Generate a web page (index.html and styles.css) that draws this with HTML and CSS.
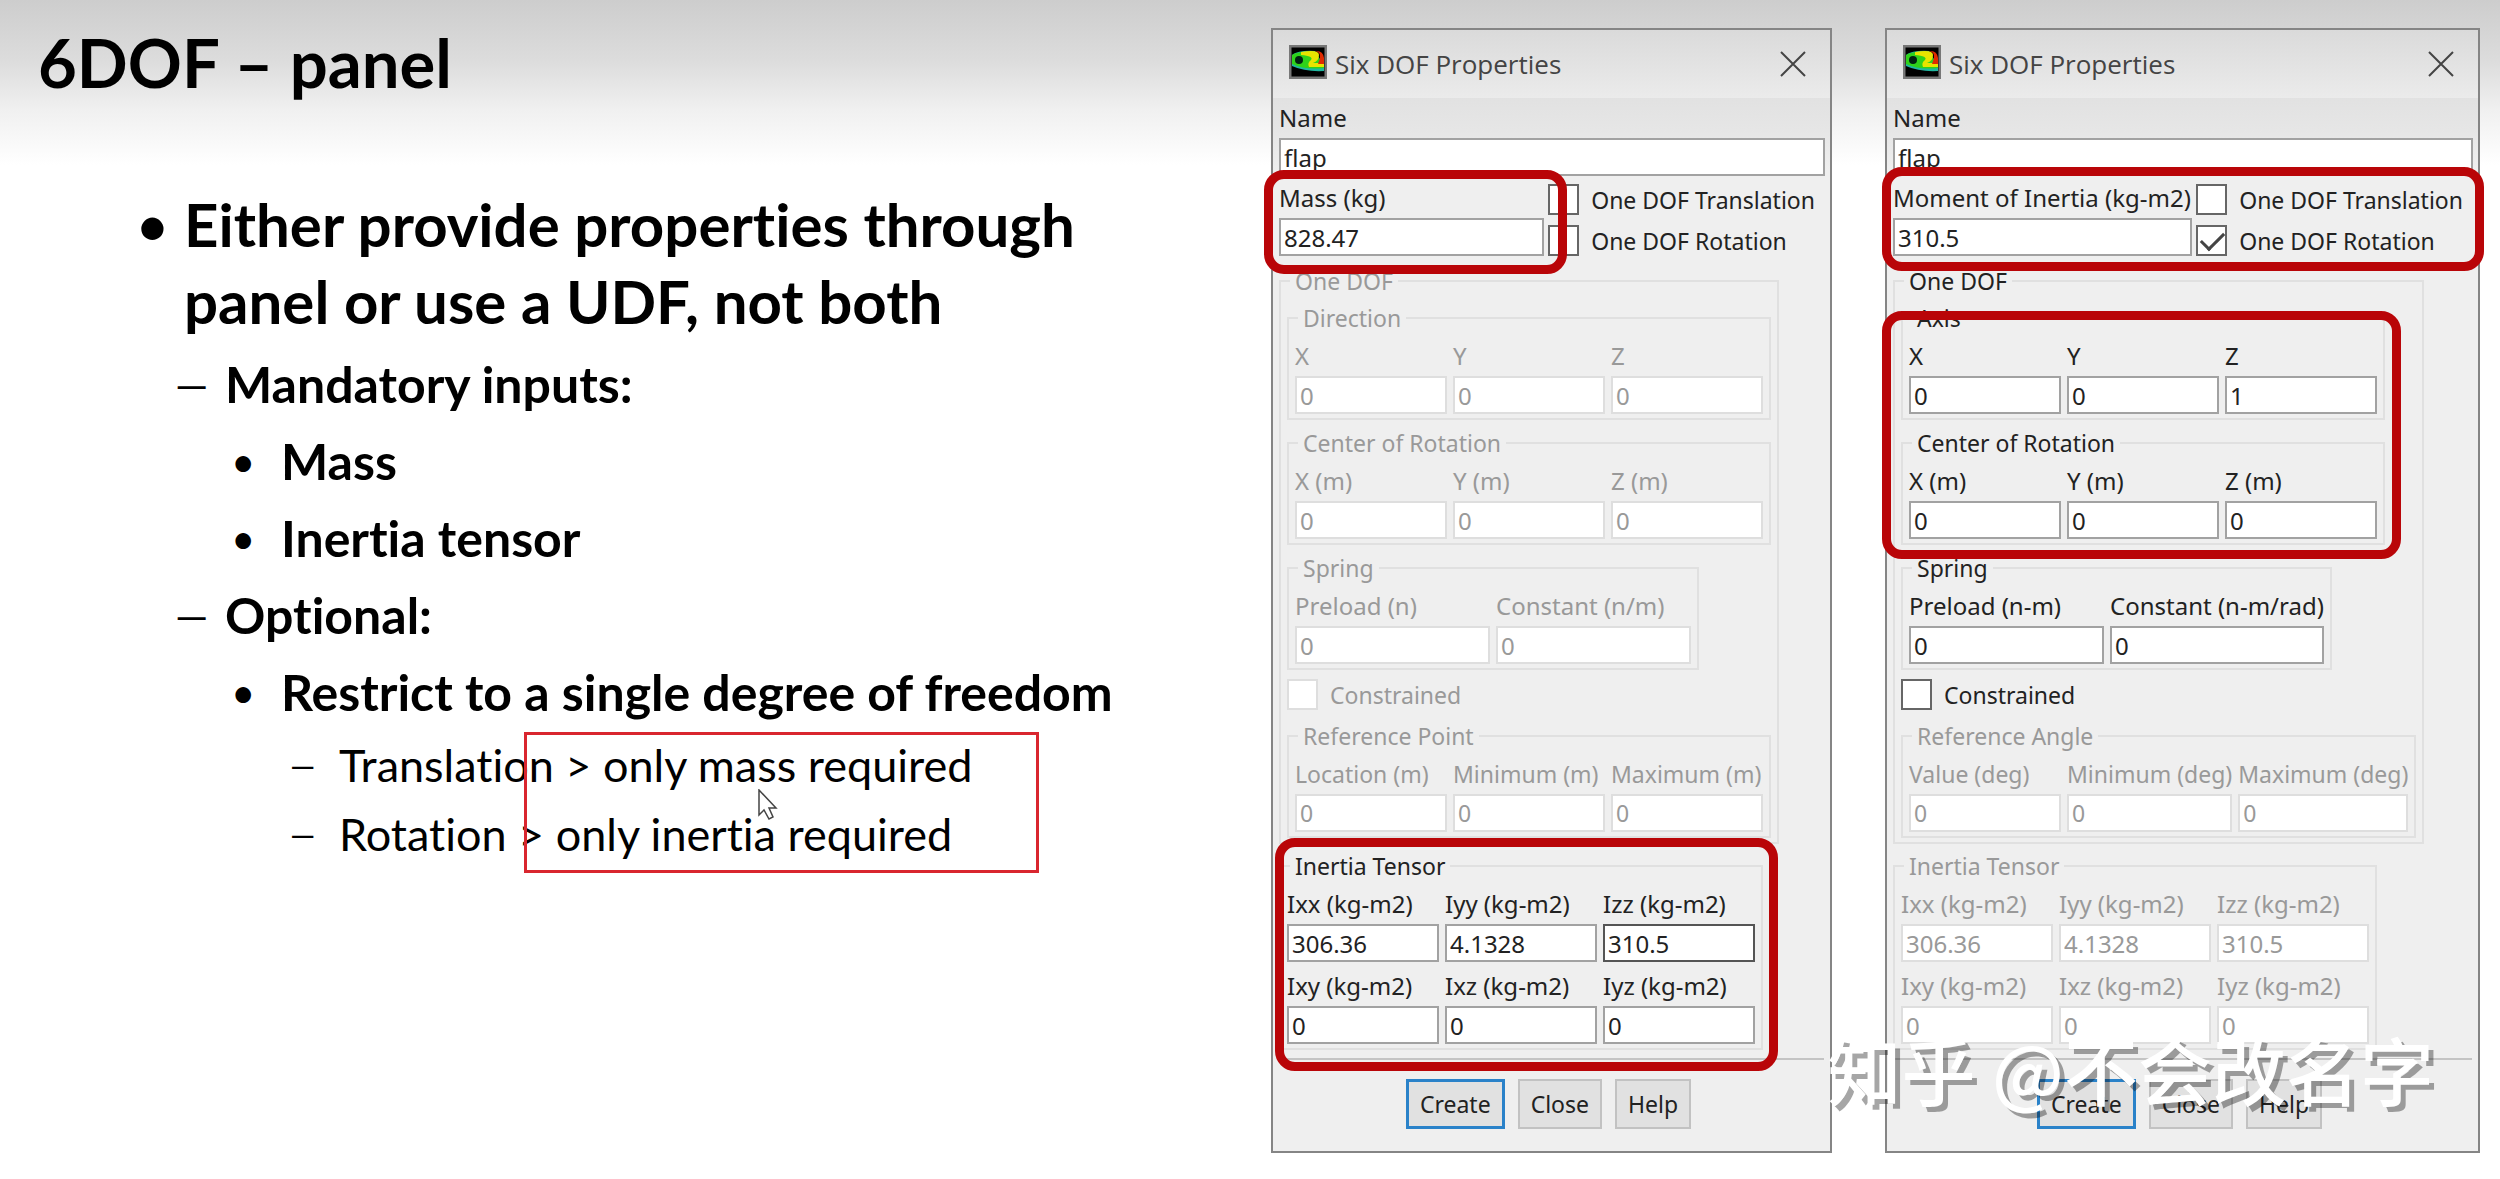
FILE: index.html
```html
<!DOCTYPE html>
<html lang="en">
<head>
  <meta charset="UTF-8">
  <meta name="viewport" content="width=device-width, initial-scale=1.0">
  <title>6DOF – panel</title>
  <link rel="stylesheet" href="styles.css">
</head>
<body>
  <main class="slide">
    <section class="notes">
      <h1>6DOF – panel</h1>
      <ul class="points">
        <li class="point">Either provide properties through<br>panel or use a UDF, not both</li>
        <li class="topic">Mandatory inputs:</li>
        <li class="detail">Mass</li>
        <li class="detail">Inertia tensor</li>
        <li class="topic">Optional:</li>
        <li class="detail">Restrict to a single degree of freedom</li>
      </ul>
      <ul class="options">
        <li>Translation &gt; only mass required</li>
        <li>Rotation &gt; only inertia required</li>
      </ul>
      <div class="frame">
        <svg class="cursor" width="20" height="31" viewBox="0 0 20 31">
          <path d="M1 1v25l5-5 5 9 4-2-4-9h7z" fill="#fff" stroke="#444" stroke-width="1.5"/>
        </svg>
      </div>
    </section>

    <!-- Free body: mass and inertia tensor -->
    <form class="dialog">
      <header class="titlebar">
        <svg class="app-icon" width="38" height="34" viewBox="0 0 38 34">
          <rect x="1" y="1" width="36" height="32" fill="#000" stroke="#777" stroke-width="3"/>
          <path d="M3 10Q10 5 26 6l9 15v5Q16 27 3 21z" fill="#1fb7a0"/>
          <path d="M3 10Q10 6 26 7l9 14v2Q16 25 3 19z" fill="#2fd21a"/>
          <path d="M12 7Q30 4 30 10q0 6-6 8h11v4H20q-2-4 2-7 3-4-10-5z" fill="#e8e400"/>
          <path d="M26 6q6 1 5 7l-2 6h6v-6q-1-8-9-7z" fill="#e02a00"/>
          <circle cx="10" cy="15" r="4" fill="#021"/>
        </svg>
        <h2>Six DOF Properties</h2>
        <button type="button" class="close" aria-label="Close window">
          <svg width="26" height="26" viewBox="0 0 26 26"><path d="M1 1l24 24M25 1L1 25" stroke="#444" stroke-width="2"/></svg>
        </button>
      </header>
      <div class="content">
        <div class="field">
          <label for="a-name">Name</label>
          <input type="text" id="a-name" value="flap">
        </div>
        <div class="top-row">
          <div class="field">
            <label for="a-mass">Mass (kg)</label>
            <input type="text" id="a-mass" value="828.47">
          </div>
          <div class="checks">
            <label class="check"><input type="checkbox"> One DOF Translation</label>
            <label class="check"><input type="checkbox"> One DOF Rotation</label>
          </div>
        </div>
        <fieldset class="group outer" disabled>
          <legend>One DOF</legend>
          <fieldset class="group">
            <legend>Direction</legend>
            <div class="fields">
              <div class="field"><label for="a-dx">X</label><input type="text" id="a-dx" value="0"></div>
              <div class="field"><label for="a-dy">Y</label><input type="text" id="a-dy" value="0"></div>
              <div class="field"><label for="a-dz">Z</label><input type="text" id="a-dz" value="0"></div>
            </div>
          </fieldset>
          <fieldset class="group">
            <legend>Center of Rotation</legend>
            <div class="fields">
              <div class="field"><label for="a-cx">X (m)</label><input type="text" id="a-cx" value="0"></div>
              <div class="field"><label for="a-cy">Y (m)</label><input type="text" id="a-cy" value="0"></div>
              <div class="field"><label for="a-cz">Z (m)</label><input type="text" id="a-cz" value="0"></div>
            </div>
          </fieldset>
          <fieldset class="group">
            <legend>Spring</legend>
            <div class="fields pair">
              <div class="field"><label for="a-pre">Preload (n)</label><input type="text" id="a-pre" value="0"></div>
              <div class="field"><label for="a-con">Constant (n/m)</label><input type="text" id="a-con" value="0"></div>
            </div>
          </fieldset>
          <label class="check"><input type="checkbox"> Constrained</label>
          <fieldset class="group compact">
            <legend>Reference Point</legend>
            <div class="fields">
              <div class="field"><label for="a-loc">Location (m)</label><input type="text" id="a-loc" value="0"></div>
              <div class="field"><label for="a-min">Minimum (m)</label><input type="text" id="a-min" value="0"></div>
              <div class="field"><label for="a-max">Maximum (m)</label><input type="text" id="a-max" value="0"></div>
            </div>
          </fieldset>
        </fieldset>
        <fieldset class="group outer">
          <legend>Inertia Tensor</legend>
          <div class="fields">
            <div class="field"><label for="a-ixx">Ixx (kg-m2)</label><input type="text" id="a-ixx" value="306.36"></div>
            <div class="field"><label for="a-iyy">Iyy (kg-m2)</label><input type="text" id="a-iyy" value="4.1328"></div>
            <div class="field"><label for="a-izz">Izz (kg-m2)</label><input type="text" id="a-izz" class="current" value="310.5"></div>
            <div class="field"><label for="a-ixy">Ixy (kg-m2)</label><input type="text" id="a-ixy" value="0"></div>
            <div class="field"><label for="a-ixz">Ixz (kg-m2)</label><input type="text" id="a-ixz" value="0"></div>
            <div class="field"><label for="a-iyz">Iyz (kg-m2)</label><input type="text" id="a-iyz" value="0"></div>
          </div>
        </fieldset>
      </div>
      <footer class="actions">
        <button type="button" class="primary">Create</button>
        <button type="button">Close</button>
        <button type="button">Help</button>
      </footer>
      <div class="marker marker-mass"></div>
      <div class="marker marker-tensor"></div>
    </form>

    <!-- One DOF rotation: moment of inertia and axis -->
    <form class="dialog">
      <header class="titlebar">
        <svg class="app-icon" width="38" height="34" viewBox="0 0 38 34">
          <rect x="1" y="1" width="36" height="32" fill="#000" stroke="#777" stroke-width="3"/>
          <path d="M3 10Q10 5 26 6l9 15v5Q16 27 3 21z" fill="#1fb7a0"/>
          <path d="M3 10Q10 6 26 7l9 14v2Q16 25 3 19z" fill="#2fd21a"/>
          <path d="M12 7Q30 4 30 10q0 6-6 8h11v4H20q-2-4 2-7 3-4-10-5z" fill="#e8e400"/>
          <path d="M26 6q6 1 5 7l-2 6h6v-6q-1-8-9-7z" fill="#e02a00"/>
          <circle cx="10" cy="15" r="4" fill="#021"/>
        </svg>
        <h2>Six DOF Properties</h2>
        <button type="button" class="close" aria-label="Close window">
          <svg width="26" height="26" viewBox="0 0 26 26"><path d="M1 1l24 24M25 1L1 25" stroke="#444" stroke-width="2"/></svg>
        </button>
      </header>
      <div class="content">
        <div class="field">
          <label for="b-name">Name</label>
          <input type="text" id="b-name" value="flap">
        </div>
        <div class="top-row">
          <div class="field">
            <label for="b-moment">Moment of Inertia (kg-m2)</label>
            <input type="text" id="b-moment" value="310.5">
          </div>
          <div class="checks">
            <label class="check"><input type="checkbox"> One DOF Translation</label>
            <label class="check"><input type="checkbox" checked> One DOF Rotation</label>
          </div>
        </div>
        <fieldset class="group outer">
          <legend>One DOF</legend>
          <fieldset class="group">
            <legend>Axis</legend>
            <div class="fields">
              <div class="field"><label for="b-ax">X</label><input type="text" id="b-ax" value="0"></div>
              <div class="field"><label for="b-ay">Y</label><input type="text" id="b-ay" value="0"></div>
              <div class="field"><label for="b-az">Z</label><input type="text" id="b-az" value="1"></div>
            </div>
          </fieldset>
          <fieldset class="group">
            <legend>Center of Rotation</legend>
            <div class="fields">
              <div class="field"><label for="b-cx">X (m)</label><input type="text" id="b-cx" value="0"></div>
              <div class="field"><label for="b-cy">Y (m)</label><input type="text" id="b-cy" value="0"></div>
              <div class="field"><label for="b-cz">Z (m)</label><input type="text" id="b-cz" value="0"></div>
            </div>
          </fieldset>
          <fieldset class="group">
            <legend>Spring</legend>
            <div class="fields pair">
              <div class="field"><label for="b-pre">Preload (n-m)</label><input type="text" id="b-pre" value="0"></div>
              <div class="field"><label for="b-con">Constant (n-m/rad)</label><input type="text" id="b-con" value="0"></div>
            </div>
          </fieldset>
          <label class="check"><input type="checkbox"> Constrained</label>
          <fieldset class="group compact" disabled>
            <legend>Reference Angle</legend>
            <div class="fields">
              <div class="field"><label for="b-val">Value (deg)</label><input type="text" id="b-val" value="0"></div>
              <div class="field"><label for="b-min">Minimum (deg)</label><input type="text" id="b-min" value="0"></div>
              <div class="field"><label for="b-max">Maximum (deg)</label><input type="text" id="b-max" value="0"></div>
            </div>
          </fieldset>
        </fieldset>
        <fieldset class="group outer" disabled>
          <legend>Inertia Tensor</legend>
          <div class="fields">
            <div class="field"><label for="b-ixx">Ixx (kg-m2)</label><input type="text" id="b-ixx" value="306.36"></div>
            <div class="field"><label for="b-iyy">Iyy (kg-m2)</label><input type="text" id="b-iyy" value="4.1328"></div>
            <div class="field"><label for="b-izz">Izz (kg-m2)</label><input type="text" id="b-izz" value="310.5"></div>
            <div class="field"><label for="b-ixy">Ixy (kg-m2)</label><input type="text" id="b-ixy" value="0"></div>
            <div class="field"><label for="b-ixz">Ixz (kg-m2)</label><input type="text" id="b-ixz" value="0"></div>
            <div class="field"><label for="b-iyz">Iyz (kg-m2)</label><input type="text" id="b-iyz" value="0"></div>
          </div>
        </fieldset>
      </div>
      <footer class="actions">
        <button type="button" class="primary">Create</button>
        <button type="button">Close</button>
        <button type="button">Help</button>
      </footer>
      <div class="marker marker-moment"></div>
      <div class="marker marker-axis"></div>
    </form>

    <p class="watermark" lang="zh">知乎 @不会改名字</p>
  </main>
</body>
</html>
```

FILE: styles.css
```css
* {
  box-sizing: border-box;
}

body {
  margin: 0;
  background: #fff;
  color: #000;
  font-family: "Noto Sans", sans-serif;
}

.slide {
  position: relative;
  display: grid;
  grid-template-columns: minmax(0, 1218fr) minmax(0, 561fr) minmax(0, 595fr);
  column-gap: 53px;
  align-items: start;
  min-height: 100vh;
  padding: 28px 20px 24px 0;
  background: linear-gradient(#cdcdcd, #dcdcdc 60px, #f0f0f0 110px, #fff 165px);
}

/* Slide text */
.notes {
  position: relative;
  padding-left: 38px;
  font-family: Lato, sans-serif;
  font-variant-ligatures: none;
}

h1 {
  margin: 0 0 90px;
  font-size: 67px;
  line-height: 68px;
}

ul {
  margin: 0;
  padding: 0;
  list-style: none;
}

li {
  display: flex;
  line-height: 77px;
  white-space: nowrap;
}

.points {
  font-weight: bold;
}

.point {
  margin-bottom: 6px;
  padding-left: 97px;
  font-size: 60px;
}

.topic {
  padding-left: 137px;
  font-size: 50px;
}

.detail {
  padding-left: 193px;
  font-size: 50px;
}

.options {
  padding-left: 252px;
}

.options li {
  font-size: 45px;
  line-height: 69px;
}

li::before {
  flex: none;
  width: 50px;
  content: "—";
  font-size: 42px;
  font-weight: normal;
}

.point::before {
  width: 49px;
  content: "•";
  font-size: 60px;
}

.detail::before {
  content: "•";
}

.options li::before {
  width: 49px;
  font-size: 32px;
}

.frame {
  position: absolute;
  top: 704px;
  left: 524px;
  width: 515px;
  height: 141px;
  border: 3px solid #d9262f;
}

.cursor {
  position: absolute;
  top: 54px;
  left: 231px;
}

/* Dialogs */
.dialog {
  position: relative;
  border: 2px solid #858585;
  background: linear-gradient(#d8d8d8, #e6e6e6 100px, #efefef 140px);
  color: #222;
  font-size: 24px;
}

.titlebar {
  display: flex;
  align-items: center;
  gap: 8px;
  height: 68px;
  padding: 0 24px 0 16px;
  background: linear-gradient(#dadada, #ebebeb);
}

.app-icon {
  margin-bottom: 4px;
}

h2 {
  flex: 1;
  margin: 0;
  color: #444;
  font-family: "Open Sans", sans-serif;
  font-size: 26px;
  font-weight: normal;
}

.close {
  display: flex;
  padding: 0;
  border: 0;
  background: none;
}

.content {
  display: flex;
  flex-direction: column;
  gap: 4px;
  padding: 2px 5px 8px 6px;
}

.field {
  display: flex;
  flex-direction: column;
  gap: 2px;
  white-space: nowrap;
}

.field label {
  line-height: 36px;
}

input[type="text"] {
  width: 0;
  min-width: 100%;
  height: 38px;
  padding: 0 3px;
  border: 2px solid #a2a2a2;
  background: #fff;
  color: #222;
  font: inherit;
}

input.current {
  border-color: #555;
}

.top-row {
  display: flex;
  gap: 4px;
}

.top-row .field {
  flex: 1;
}

.checks {
  display: flex;
  flex-direction: column;
  gap: 4px;
  padding-top: 1px;
}

.check {
  display: flex;
  align-items: center;
  gap: 12px;
  height: 37px;
  font-size: 23px;
  white-space: nowrap;
}

.checks .check {
  padding-right: 10px;
}

input[type="checkbox"] {
  flex: none;
  width: 31px;
  height: 31px;
  margin: 0;
  appearance: none;
  border: 2px solid #666;
  background: #fff;
}

input[type="checkbox"]:checked::before {
  display: block;
  width: 20px;
  height: 10px;
  margin: 5px 0 0 3px;
  border: solid #444;
  border-width: 0 0 3px 3px;
  content: "";
  transform: rotate(-45deg);
}

.group {
  display: block;
  width: fit-content;
  min-width: 0;
  margin: 0;
  padding: 3px 6px 4px;
  border: 2px solid #e0e0e0;
}

.compact {
  font-size: 23px;
}

.outer {
  display: flex;
  flex-direction: column;
  gap: 6px;
  margin-top: 1px;
}

legend {
  margin-left: 3px;
  padding: 0 5px;
  font-size: 23px;
  line-height: 34px;
}

.fields {
  display: grid;
  grid-template-columns: repeat(3, minmax(152px, auto));
  gap: 6px;
}

.pair {
  grid-template-columns: repeat(2, minmax(195px, auto));
}

.group:disabled,
.group:disabled input[type="text"] {
  color: #999;
}

.group:disabled input {
  border-color: #dedede;
}

.actions {
  display: flex;
  justify-content: center;
  gap: 13px;
  margin: 0 6px;
  padding: 19px 6px 22px 0;
  border-top: 2px solid #c4c4c4;
}

.actions button {
  height: 50px;
  padding: 0 11px;
  border: 2px solid #c2c2c2;
  background: #e1e1e1;
  color: #222;
  font: inherit;
  font-size: 23px;
}

.actions .primary {
  border: 3px solid #2a82c9;
}

/* Red outlines drawn over the dialogs */
.marker {
  position: absolute;
  border: 9px solid #b90508;
  border-radius: 20px;
}

.marker-mass {
  top: 140px;
  left: -9px;
  width: 303px;
  height: 104px;
}

.marker-tensor {
  top: 808px;
  left: 2px;
  width: 503px;
  height: 233px;
}

.marker-moment {
  top: 137px;
  right: -6px;
  left: -5px;
  height: 104px;
}

.marker-axis {
  top: 281px;
  left: -5px;
  width: 519px;
  height: 248px;
}

.watermark {
  position: absolute;
  right: 66px;
  bottom: 61px;
  margin: 0;
  color: #fff;
  font-family: "Noto Sans CJK SC", sans-serif;
  font-size: 74px;
  font-weight: 500;
  line-height: 100px;
  text-shadow: 5px 5px 0 rgba(0, 0, 0, 0.35);
}
```
